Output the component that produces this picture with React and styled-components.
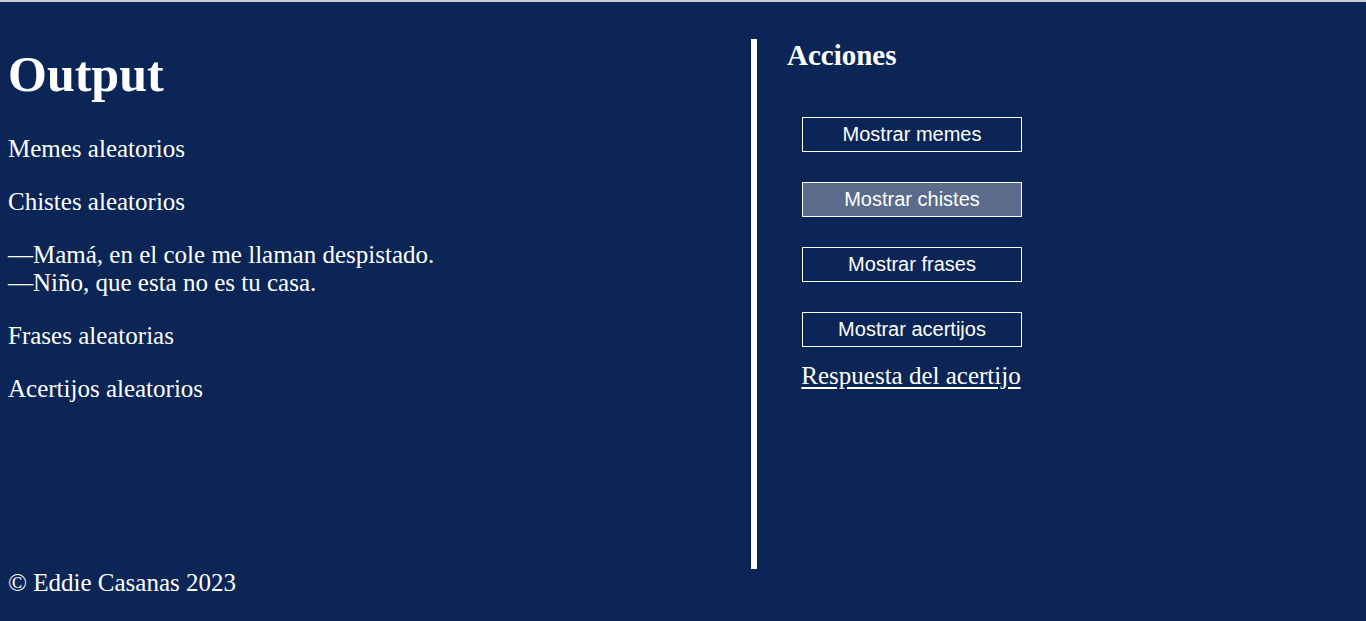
import React from "react";
import styled, { createGlobalStyle } from "styled-components";

const GlobalStyle = createGlobalStyle`
  html, body {
    margin: 0;
    padding: 0;
    background-color: #0b2656;
  }
  body {
    border-top: 2px solid #c9ccd3;
    min-height: 619px;
    color: #ffffff;
    font-family: "Liberation Serif", "Times New Roman", serif;
  }
`;

const Page = styled.div`
  padding: 37px 0 0 8px;
`;

const Main = styled.main`
  display: flex;
  height: 530px;
`;

const Output = styled.section`
  width: 743px;
  padding-top: 7px;
`;

const Title = styled.h1`
  margin: 0 0 32px;
  font-size: 50px;
  line-height: 57px;
  font-weight: 700;
`;

const Text = styled.p`
  margin: 0 0 25px;
  font-size: 25px;
  line-height: 28px;
`;

const Actions = styled.aside`
  border-left: 6px solid #ffffff;
  padding-left: 30px;
`;

const ActionsTitle = styled.h2`
  margin: 0 0 45px;
  font-size: 29px;
  line-height: 33px;
  font-weight: 700;
`;

const ButtonList = styled.div`
  display: flex;
  flex-direction: column;
  gap: 30px;
  width: 220px;
  margin-left: 15px;
`;

const ActionButton = styled.button`
  height: 35px;
  width: 220px;
  padding: 0;
  border: 1px solid #ffffff;
  background-color: ${(p) => (p.$active ? "#5b6b8b" : "transparent")};
  color: #ffffff;
  font-family: "Liberation Sans", Arial, sans-serif;
  font-size: 20px;
  cursor: pointer;
`;

const Answer = styled.a`
  display: block;
  width: 220px;
  margin: -15px 0 0 14px;
  text-align: center;
  color: #ffffff;
  font-size: 25px;
  line-height: 28px;
  text-decoration: underline;
  text-underline-offset: 3px;
`;

const Footer = styled.footer`
  font-size: 25px;
  line-height: 28px;
`;

export default function App() {
  const buttons = ["Mostrar memes", "Mostrar chistes", "Mostrar frases", "Mostrar acertijos"];
  return (
    <>
      <GlobalStyle />
      <Page>
        <Main>
          <Output>
            <Title>Output</Title>
            <Text>Memes aleatorios</Text>
            <Text>Chistes aleatorios</Text>
            <Text>
              —Mamá, en el cole me llaman despistado.
              <br />
              —Niño, que esta no es tu casa.
            </Text>
            <Text>Frases aleatorias</Text>
            <Text>Acertijos aleatorios</Text>
          </Output>
          <Actions>
            <ActionsTitle>Acciones</ActionsTitle>
            <ButtonList>
              {buttons.map((b) => (
                <ActionButton key={b} $active={b === "Mostrar chistes"}>
                  {b}
                </ActionButton>
              ))}
              <span />
            </ButtonList>
            <Answer href="#">Respuesta del acertijo</Answer>
          </Actions>
        </Main>
        <Footer>© Eddie Casanas 2023</Footer>
      </Page>
    </>
  );
}
